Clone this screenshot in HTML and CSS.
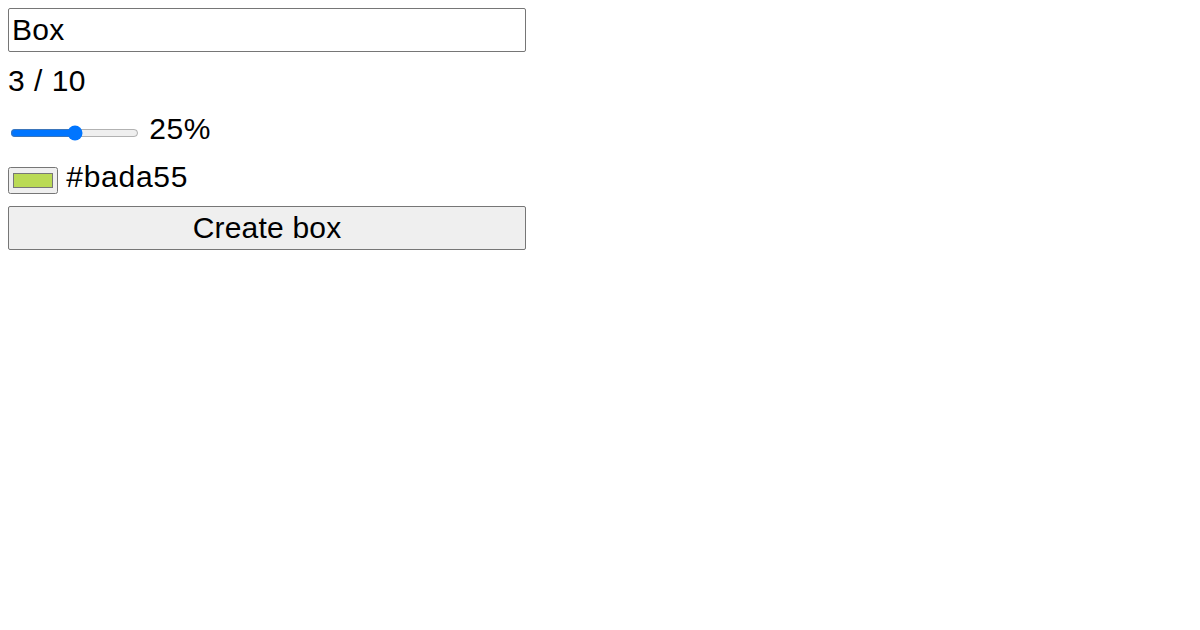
FILE: index.html
```html
<!DOCTYPE html>
<html>
<head>
<meta charset="utf-8">
<link rel="stylesheet" href="styles.css">
</head>
<body>
<form class="form">
  <input class="name" type="text" value="Box">
  <div class="count">3 / 10</div>
  <div class="row row-range"><input class="range" type="range" min="0" max="50" value="25"> <span class="label">25%</span></div>
  <div class="row row-color"><input class="color" type="color" value="#bada55"> <span class="label label-color">#bada55</span></div>
  <button class="create" type="button">Create box</button>
</form>
</body>
</html>
```
FILE: styles.css
```css
body {
  margin: 8px;
  font-family: "Liberation Sans", Arial, sans-serif;
  font-size: 30px;
  color: #000;
  background: #fff;
}
.form {
  display: flex;
  flex-direction: column;
  gap: 12px;
  width: 518px;
}
.name {
  box-sizing: border-box;
  width: 518px;
  height: 44px;
  margin: 0;
  padding: 0 3px;
  font: inherit;
  letter-spacing: 0.3px;
  color: #000;
  border: 1px solid #767676;
  border-radius: 2px;
}
.count {
  line-height: normal;
  letter-spacing: 0.5px;
}
.row {
  line-height: normal;
}
.row-range {
  padding-top: 2px;
}
.range {
  vertical-align: -2px;
}
.label {
  letter-spacing: 0.5px;
}
.row-color {
  padding-top: 2px;
}
.color {
  vertical-align: -1px;
}
.label-color {
  letter-spacing: 0.7px;
}
.create {
  box-sizing: border-box;
  width: 518px;
  height: 44px;
  margin: 0;
  font: inherit;
  letter-spacing: 0.2px;
  color: #000;
  background: #efefef;
  border: 1px solid #767676;
  border-radius: 2px;
}
```
